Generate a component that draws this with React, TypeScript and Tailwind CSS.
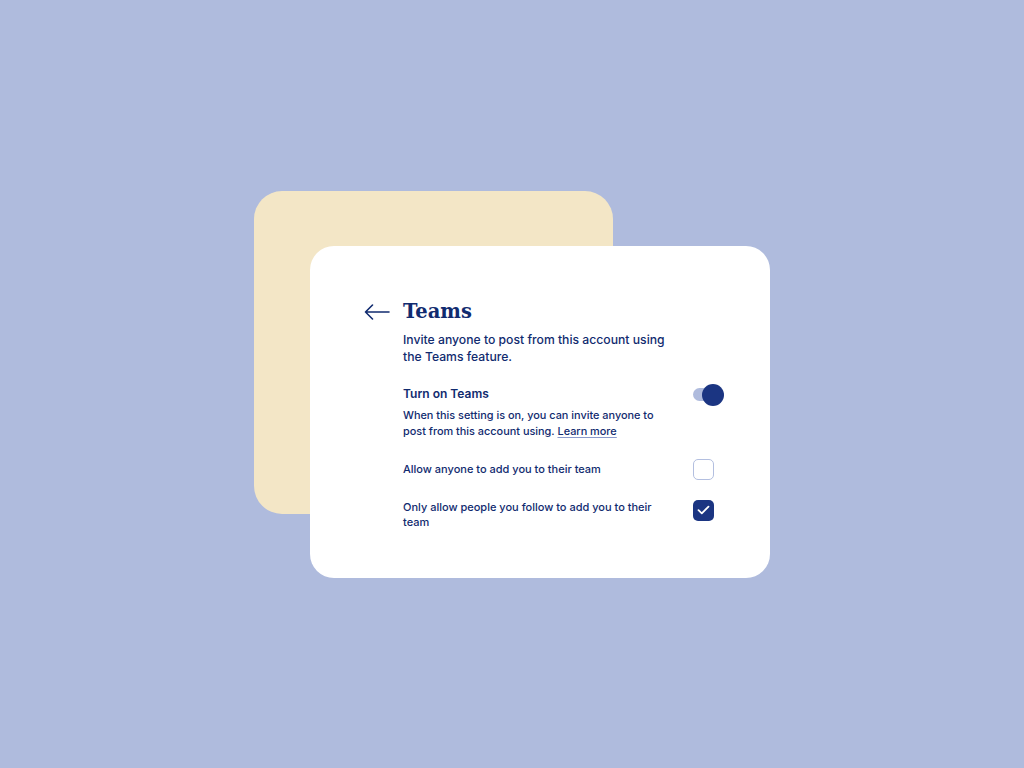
import { useState } from "react"

const sans = "font-['Inter','Open_Sans',sans-serif]"

function Toggle({ on, onChange }: { on: boolean; onChange: (v: boolean) => void }) {
  return (
    <button
      type="button"
      onClick={() => onChange(!on)}
      className="relative flex h-[22px] w-[31px] items-center"
    >
      <span className="h-[13px] w-[24px] rounded-full bg-[#afbbdd]" />
      <span
        className={
          on
            ? "absolute right-0 top-0 h-[22px] w-[22px] rounded-full bg-[#1b3582]"
            : "absolute left-0 top-0 h-[22px] w-[22px] rounded-full bg-white border border-[#afbbdd]"
        }
      />
    </button>
  )
}

function Checkbox({ checked, onChange }: { checked: boolean; onChange: (v: boolean) => void }) {
  return (
    <button
      type="button"
      onClick={() => onChange(!checked)}
      className={
        checked
          ? "flex h-[21px] w-[21px] shrink-0 items-center justify-center rounded-[5px] bg-[#1b3582]"
          : "flex h-[21px] w-[21px] shrink-0 items-center justify-center rounded-[5px] border-[1.5px] border-[#b3bfe0] bg-white"
      }
    >
      {checked && (
        <svg width="13" height="10" viewBox="0 0 13 10" fill="none">
          <path d="M1.5 5.2L4.8 8.3L11.5 1.6" stroke="white" strokeWidth="1.8" strokeLinecap="round" strokeLinejoin="round" />
        </svg>
      )}
    </button>
  )
}

export default function App() {
  const [teamsOn, setTeamsOn] = useState(true)
  const [anyone, setAnyone] = useState(false)
  const [followers, setFollowers] = useState(true)

  return (
    <div className={`flex h-[768px] w-full items-center justify-center bg-[#afbbdd] ${sans}`}>
      <div className="grid">
        {/* Back card */}
        <div className="col-start-1 row-start-1 h-[323px] w-[359px] rounded-[28px] bg-[#f3e6c6]" />

        {/* Main card */}
        <div className="col-start-1 row-start-1 ml-[56px] mt-[55px] w-[460px] rounded-[24px] bg-white pb-[48px] pl-[54px] pr-[46px] pt-[52px] text-[#112b6f]">
          <div className="flex gap-[13px]">
            <button type="button" className="flex h-[28px] w-[26px] shrink-0 items-center">
              <svg width="26" height="16" viewBox="0 0 26 16" fill="none">
                <path d="M25 8H1.5M8.5 1L1.5 8L8.5 15" stroke="#112b6f" strokeWidth="1.6" strokeLinecap="round" strokeLinejoin="round" />
              </svg>
            </button>

            <div className="flex flex-1 flex-col">
              <h1 className="font-['DejaVu_Serif',serif] text-[19.5px] font-bold leading-[28px]">Teams</h1>
              <p className="mt-[5px] whitespace-nowrap text-[12.2px] font-medium leading-[17px]">
                Invite anyone to post from this account using
                <br />
                the Teams feature.
              </p>

              {/* Turn on Teams */}
              <div className="mt-[20px] flex justify-between">
                <div>
                  <p className="text-[12px] font-semibold leading-[18px]">Turn on Teams</p>
                  <p className="mt-[4px] whitespace-nowrap text-[10.9px] font-medium leading-[16px]">
                    When this setting is on, you can invite anyone to
                    <br />
                    post from this account using.{" "}
                    <a href="#" className="underline decoration-[#8a9acb] underline-offset-2">
                      Learn more
                    </a>
                  </p>
                </div>
                <div className="-mt-[1px]">
                  <Toggle on={teamsOn} onChange={setTeamsOn} />
                </div>
              </div>

              {/* Allow anyone */}
              <div className="mt-[20px] flex items-center justify-between">
                <p className="text-[11px] font-medium leading-[15px]">Allow anyone to add you to their team</p>
                <div className="mr-[10px]">
                  <Checkbox checked={anyone} onChange={setAnyone} />
                </div>
              </div>

              {/* Only followers */}
              <div className="mt-[20px] flex items-start justify-between">
                <p className="whitespace-nowrap text-[11px] font-medium leading-[15px]">
                  Only allow people you follow to add you to their
                  <br />
                  team
                </p>
                <div className="mr-[10px]">
                  <Checkbox checked={followers} onChange={setFollowers} />
                </div>
              </div>
            </div>
          </div>
        </div>
      </div>
    </div>
  )
}
